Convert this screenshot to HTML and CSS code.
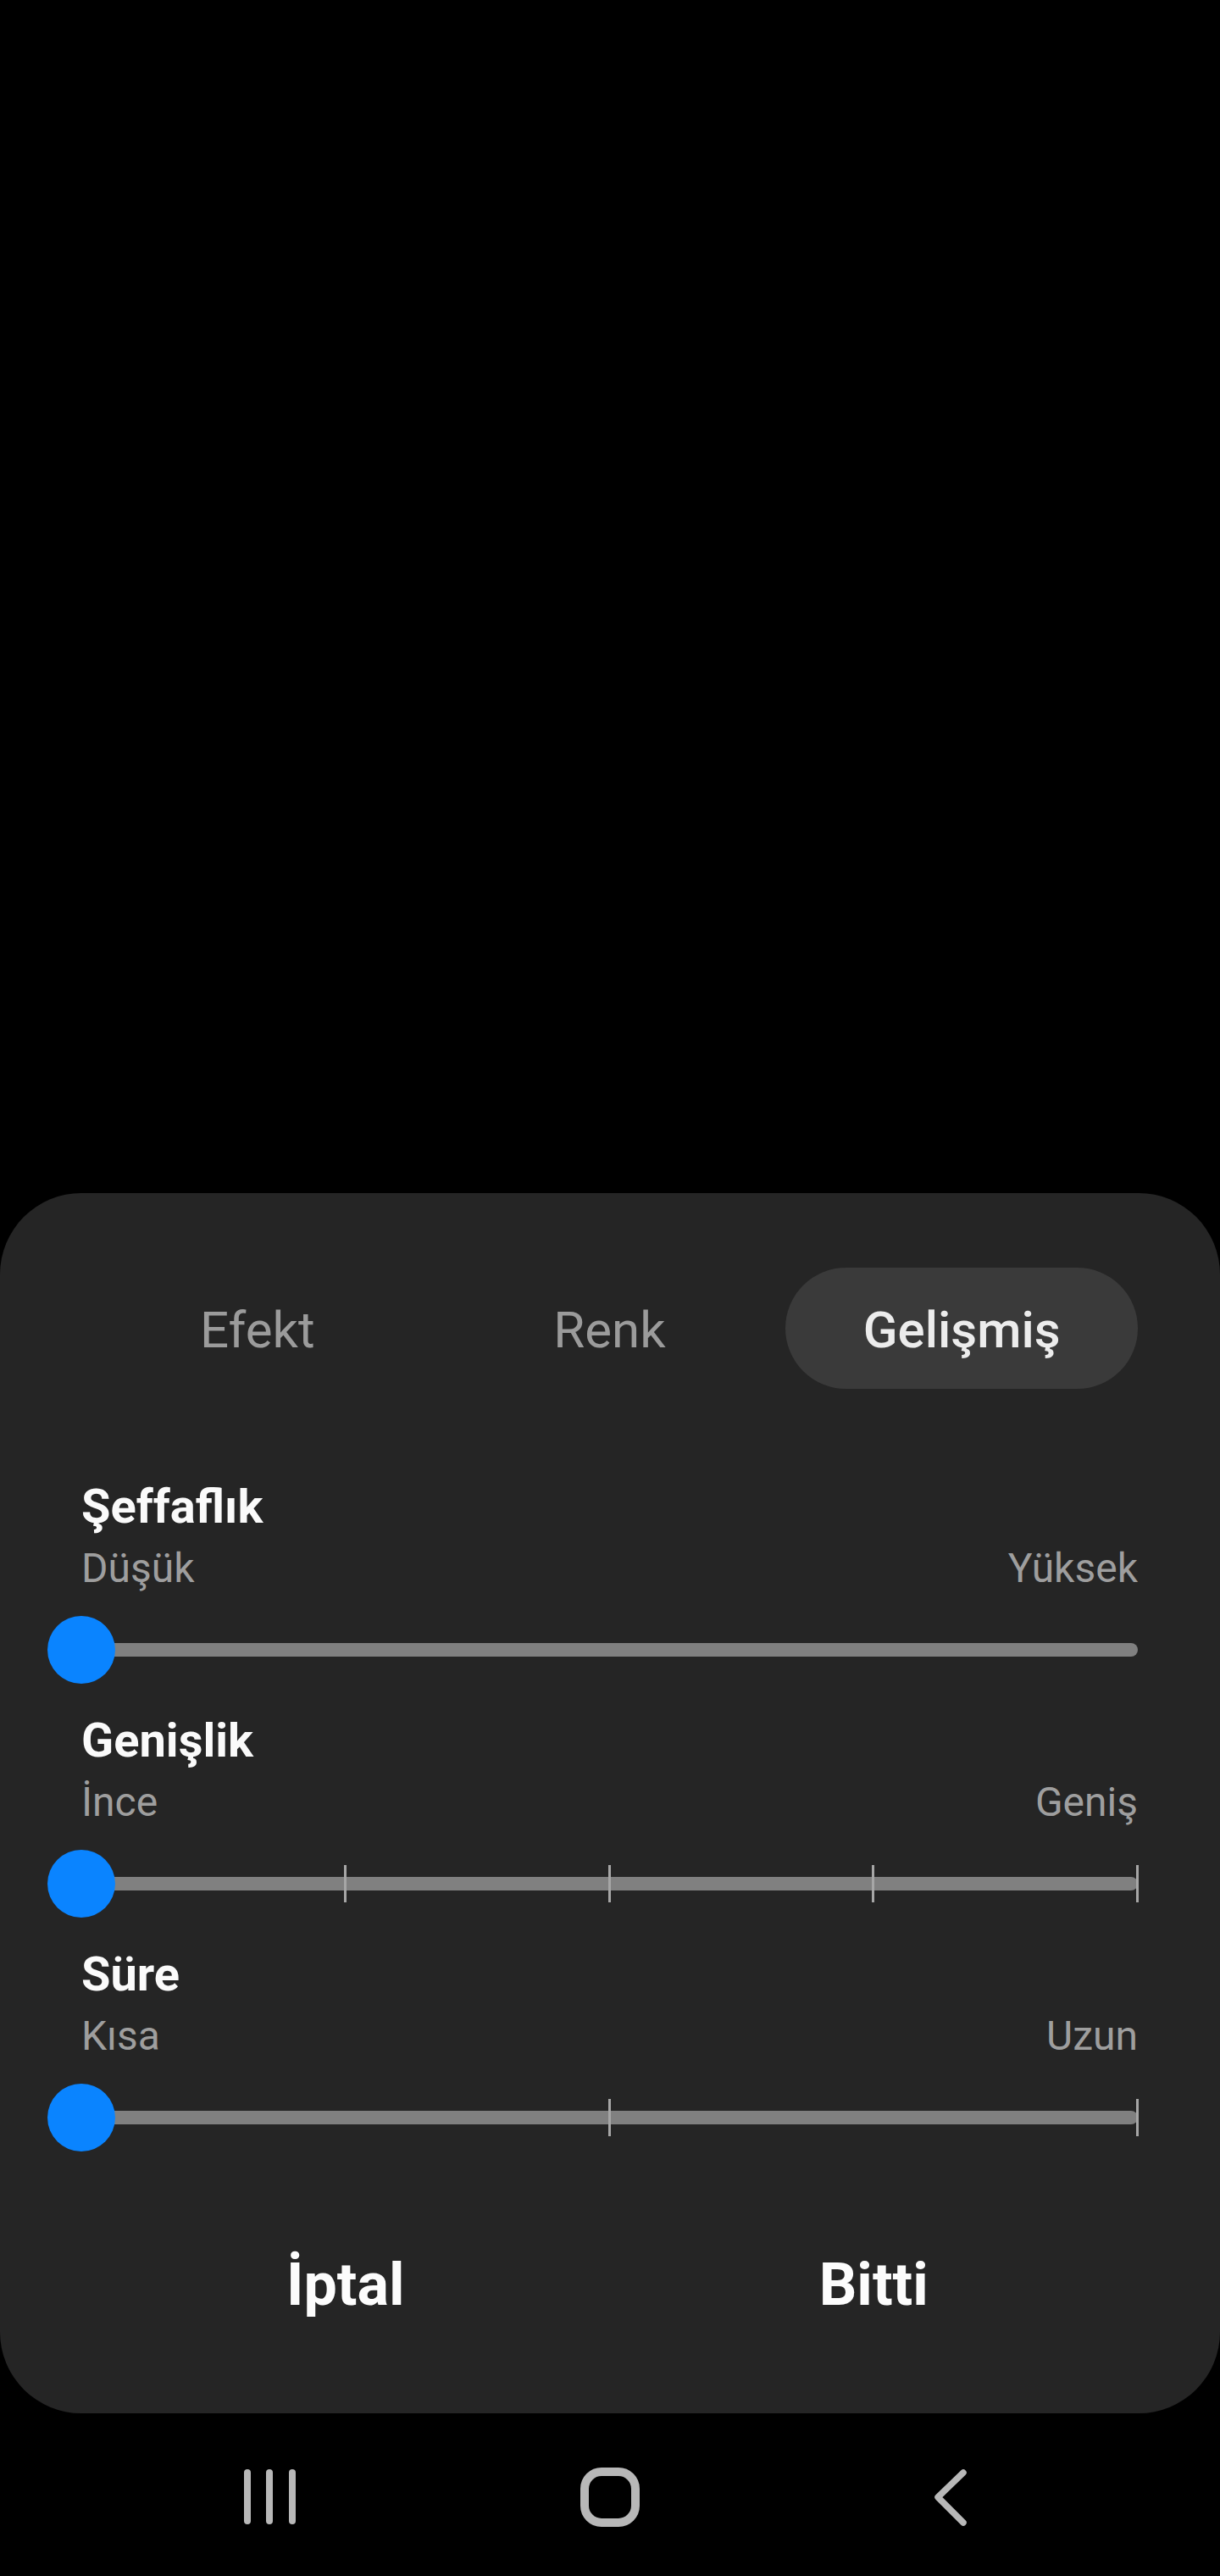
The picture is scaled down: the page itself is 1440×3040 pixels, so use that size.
FILE: index.html
```html
<!DOCTYPE html>
<html lang="tr">
<head>
<meta charset="utf-8">
<title>Gelişmiş</title>
<link rel="stylesheet" href="styles.css">
</head>
<body>
<div class="screen">
  <div class="backdrop"></div>
  <section class="sheet">
    <nav class="tabs">
      <div class="tab">Efekt</div>
      <div class="tab">Renk</div>
      <div class="tab tab-active">Gelişmiş</div>
    </nav>

    <div class="setting">
      <div class="setting-title">Şeffaflık</div>
      <div class="setting-range"><span>Düşük</span><span>Yüksek</span></div>
      <div class="slider">
        <div class="track"></div>
        <div class="thumb"></div>
      </div>
    </div>

    <div class="setting">
      <div class="setting-title">Genişlik</div>
      <div class="setting-range"><span>İnce</span><span>Geniş</span></div>
      <div class="slider">
        <div class="track">
          <span class="tick" style="left:25%"></span>
          <span class="tick" style="left:50%"></span>
          <span class="tick" style="left:75%"></span>
          <span class="tick" style="left:100%"></span>
        </div>
        <div class="thumb"></div>
      </div>
    </div>

    <div class="setting">
      <div class="setting-title">Süre</div>
      <div class="setting-range"><span>Kısa</span><span>Uzun</span></div>
      <div class="slider">
        <div class="track">
          <span class="tick" style="left:50%"></span>
          <span class="tick" style="left:100%"></span>
        </div>
        <div class="thumb"></div>
      </div>
    </div>

    <div class="actions">
      <button class="action">İptal</button>
      <button class="action">Bitti</button>
    </div>
  </section>

  <footer class="navbar">
    <div class="nav-slot">
      <svg class="nav-icon" viewBox="0 0 70 70" width="70" height="70">
        <line x1="9" y1="6" x2="9" y2="63"/>
        <line x1="35" y1="6" x2="35" y2="63"/>
        <line x1="62" y1="6" x2="62" y2="63"/>
      </svg>
    </div>
    <div class="nav-slot">
      <svg class="nav-icon" viewBox="0 0 70 70" width="70" height="70">
        <rect x="5" y="5" width="60" height="60" rx="20" ry="20" class="home"/>
      </svg>
    </div>
    <div class="nav-slot">
      <svg class="nav-icon" viewBox="0 0 70 70" width="70" height="70">
        <polyline points="50,6 20,35 50,65" class="back"/>
      </svg>
    </div>
  </footer>
</div>
</body>
</html>
```

FILE: styles.css
```css
* {
  box-sizing: border-box;
}

html, body {
  margin: 0;
  padding: 0;
  background: #000;
}

body {
  font-family: Roboto, "Noto Sans", "Liberation Sans", sans-serif;
  color: #fff;
}

.screen {
  width: 1440px;
  height: 3040px;
  display: flex;
  flex-direction: column;
  background: #000;
}

.backdrop {
  height: 1408px;
  flex: none;
}

.sheet {
  flex: none;
  height: 1440px;
  background: #252525;
  border-radius: 96px;
  padding: 88px 97px 0 96px;
  display: flex;
  flex-direction: column;
}

/* Tabs */
.tabs {
  display: grid;
  grid-template-columns: repeat(3, 1fr);
  height: 143px;
  margin-bottom: 106px;
}

.tab {
  display: flex;
  align-items: center;
  justify-content: center;
  font-size: 60px;
  color: #9b9b9b;
  font-weight: 400;
  padding-top: 4px;
}

.tab-active {
  background: #3a3a3a;
  border-radius: 72px;
  color: #ececec;
  font-weight: 500;
}

/* Settings */
.setting {
  display: flex;
  flex-direction: column;
  margin-bottom: 34px;
}

.setting-title {
  font-size: 56px;
  line-height: 66px;
  font-weight: 700;
  color: #fafafa;
}

.setting-range {
  margin-top: 12px;
  display: flex;
  justify-content: space-between;
  font-size: 48px;
  line-height: 56px;
  color: #9e9e9e;
}

.slider {
  position: relative;
  margin-top: 28px;
  height: 80px;
  display: flex;
  align-items: center;
}

.track {
  position: relative;
  width: 100%;
  height: 16px;
  background: #808080;
  border-radius: 0 8px 8px 0;
}

.tick {
  position: absolute;
  top: -14px;
  width: 3px;
  height: 44px;
  margin-left: -2px;
  background: #a6a6a6;
}

.thumb {
  position: absolute;
  left: -40px;
  top: 0;
  width: 80px;
  height: 80px;
  border-radius: 50%;
  background: #0a84ff;
}

/* Actions */
.actions {
  margin-top: 73px;
  display: grid;
  grid-template-columns: 1fr 1fr;
}

.action {
  background: none;
  border: none;
  padding: 0;
  font-family: inherit;
  font-size: 70px;
  line-height: 100px;
  font-weight: 700;
  color: #fcfcfc;
  text-align: center;
}

/* Navigation bar */
.navbar {
  flex: 1;
  display: flex;
  justify-content: center;
  align-items: flex-start;
  padding-top: 64px;
}

.nav-slot {
  width: 402px;
  display: flex;
  justify-content: center;
}

.nav-icon {
  display: block;
  fill: none;
  stroke: #b8b8b8;
  stroke-linecap: round;
  stroke-linejoin: round;
}

.nav-icon line {
  stroke-width: 8;
}

.nav-icon .home {
  stroke-width: 10;
}

.nav-icon .back {
  stroke-width: 7.5;
}
```
